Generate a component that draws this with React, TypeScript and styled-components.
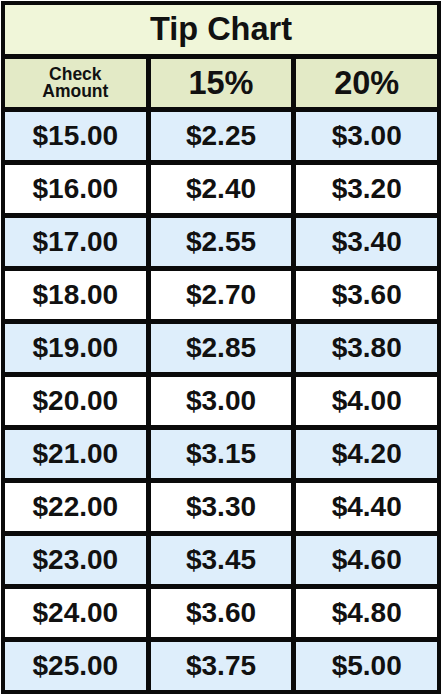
import React from "react";
import styled, { createGlobalStyle } from "styled-components";

const Global = createGlobalStyle`
  html, body { margin: 0; padding: 0; background: #ffffff; }
  body { font-family: "Liberation Sans", Arial, sans-serif; }
`;

const Table = styled.div`
  margin: 1px 0 0 1px;
  width: 440px;
  box-sizing: border-box;
  display: grid;
  grid-template-columns: 1fr 1fr 1fr;
  grid-template-rows: 49px 48px repeat(11, 48px);
  gap: 5px;
  padding: 4px;
  background: #0a0a0a;
`;

const Title = styled.div`
  grid-column: 1 / -1;
  background: #f0f6d9;
  display: flex;
  align-items: center;
  justify-content: center;
  font-weight: 700;
  font-size: 32.5px;
  color: #111;
  padding-bottom: 1px;
`;

const HeadCell = styled.div<{ $small?: boolean }>`
  background: #e3eac6;
  display: flex;
  flex-direction: column;
  align-items: center;
  justify-content: center;
  text-align: center;
  font-weight: 700;
  color: #111;
  font-size: ${(p) => (p.$small ? "17.5px" : "32.5px")};
  line-height: ${(p) => (p.$small ? "17.5px" : "1")};
`;

const HeadLine = styled.span`
  display: block;
`;

const Cell = styled.div<{ $blue: boolean }>`
  background: ${(p) => (p.$blue ? "#deeefb" : "#ffffff")};
  display: flex;
  align-items: center;
  justify-content: center;
  font-weight: 700;
  font-size: 28px;
  color: #111;
`;

const amounts = [15, 16, 17, 18, 19, 20, 21, 22, 23, 24, 25];

export default function App() {
  return (
    <>
      <Global />
      <Table>
        <Title>Tip Chart</Title>
        <HeadCell $small>
          <HeadLine>Check</HeadLine>
          <HeadLine>Amount</HeadLine>
        </HeadCell>
        <HeadCell>15%</HeadCell>
        <HeadCell>20%</HeadCell>
        {amounts.map((a, i) => {
          const blue = i % 2 === 0;
          return (
            <React.Fragment key={a}>
              <Cell $blue={blue}>${a.toFixed(2)}</Cell>
              <Cell $blue={blue}>${(a * 0.15).toFixed(2)}</Cell>
              <Cell $blue={blue}>${(a * 0.2).toFixed(2)}</Cell>
            </React.Fragment>
          );
        })}
      </Table>
    </>
  );
}
